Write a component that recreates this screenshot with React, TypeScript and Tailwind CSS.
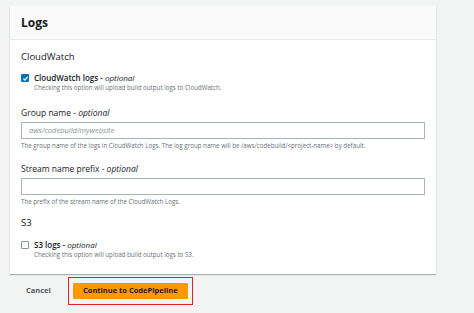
import React from 'react';

const font = { fontFamily: '"Open Sans", "Noto Sans", sans-serif' };

const Checkbox: React.FC<{ checked?: boolean }> = ({ checked }) =>
  checked ? (
    <span className="mt-[1px] flex h-[8px] w-[8px] shrink-0 items-center justify-center rounded-[1px] bg-[#0073bb]">
      <svg viewBox="0 0 10 10" className="h-[7px] w-[7px]">
        <path d="M2 5.2 L4.2 7.3 L8 2.8" fill="none" stroke="#fff" strokeWidth="1.8" />
      </svg>
    </span>
  ) : (
    <span className="mt-[1px] block h-[8px] w-[8px] shrink-0 rounded-[1px] border border-[#879596] bg-white" />
  );

const Field: React.FC<{ label: string; placeholder?: string; help: string }> = ({ label, placeholder, help }) => (
  <div>
    <div className="text-[8.5px] leading-[12px] text-[#16191f]">
      {label} - <i>optional</i>
    </div>
    <div className="mt-[3px] flex h-[17px] w-[404px] items-center border border-[#aab7b8] bg-white px-[7px] text-[7.5px] italic text-[#879596]">
      {placeholder}
    </div>
    <div className="mt-[2px] text-[6.2px] leading-[10px] text-[#687078]">{help}</div>
  </div>
);

const App: React.FC = () => {
  return (
    <div className="h-[313px] w-[474px] overflow-hidden bg-[#f2f3f3] pt-[6px]" style={font}>
      <div className="ml-[10px] w-[426px] bg-white shadow-[0_1px_1px_rgba(0,28,36,0.3)]">
        <div className="flex h-[34px] items-center border-b border-[#eaeded] bg-[#fafafa] px-[11px]">
          <span className="text-[12px] font-bold text-[#16191f]">Logs</span>
        </div>
        <div className="px-[11px] pt-[10px] pb-[14px]">
          <div className="text-[9.5px] leading-[14px] text-[#16191f]">CloudWatch</div>
          <div className="mt-[9px] flex gap-[5px]">
            <Checkbox checked />
            <div>
              <div className="text-[8px] font-semibold leading-[10px] text-[#16191f]">
                CloudWatch logs - <i className="font-normal">optional</i>
              </div>
              <div className="text-[6.2px] leading-[10px] text-[#687078]">
                Checking this option will upload build output logs to CloudWatch.
              </div>
            </div>
          </div>
          <div className="mt-[14px]">
            <Field
              label="Group name"
              placeholder="aws/codebuild/mywebsite"
              help="The group name of the logs in CloudWatch Logs. The log group name will be /aws/codebuild/<project-name> by default."
            />
          </div>
          <div className="mt-[12px]">
            <Field label="Stream name prefix" help="The prefix of the stream name of the CloudWatch Logs." />
          </div>
          <div className="mt-[9px] text-[9.5px] leading-[14px] text-[#16191f]">S3</div>
          <div className="mt-[10px] flex gap-[5px]">
            <Checkbox />
            <div>
              <div className="text-[8px] font-semibold leading-[10px] text-[#16191f]">
                S3 logs - <i className="font-normal">optional</i>
              </div>
              <div className="text-[6.2px] leading-[10px] text-[#687078]">
                Checking this option will upload build output logs to S3.
              </div>
            </div>
          </div>
        </div>
      </div>
      <div className="mt-[3px] flex items-center pl-[26px]">
        <span className="mr-[17px] text-[7.5px] font-bold text-[#545b64]">Cancel</span>
        <div className="border-[1.5px] border-[#e0222b] px-[4px] py-[5px]">
          <div className="flex h-[16px] w-[115px] items-center justify-center rounded-[1px] bg-[#ff9900] text-[7.5px] font-bold text-[#16191f]">
            Continue to CodePipeline
          </div>
        </div>
      </div>
    </div>
  );
};

export default App;
